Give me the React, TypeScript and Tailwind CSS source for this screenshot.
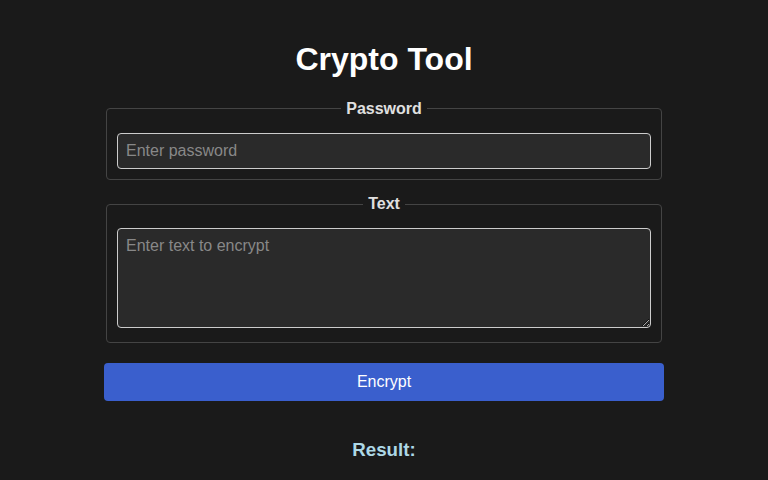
import React, { useState } from "react";

export default function App() {
  const [password, setPassword] = useState("");
  const [text, setText] = useState("");

  return (
    <div className="min-h-screen bg-[#1a1a1a] p-5 text-[#e0e0e0] font-['Liberation_Sans',Arial,sans-serif]">
      <div className="mx-auto w-[560px]">
        <h1 className="my-[21.44px] text-center text-[32px] font-bold leading-[1.15] text-white">
          Crypto Tool
        </h1>

        <fieldset className="mx-[2px] mb-[15px] rounded-[4px] border border-[#444] px-[10px] pt-[15px] pb-[10px]">
          <legend className="mx-auto px-[5px] text-base font-bold leading-[1.15]">Password</legend>
          <input
            type="password"
            value={password}
            onChange={(e) => setPassword(e.target.value)}
            placeholder="Enter password"
            className="block h-[36px] w-full rounded-[4px] border border-[#ccc] bg-[#2a2a2a] px-2 text-base text-white placeholder:text-[#888] outline-none"
          />
        </fieldset>

        <fieldset className="mx-[2px] mb-[20px] rounded-[4px] border border-[#444] px-[10px] pt-[15px] pb-[14px]">
          <legend className="mx-auto px-[5px] text-base font-bold leading-[1.15]">Text</legend>
          <textarea
            value={text}
            onChange={(e) => setText(e.target.value)}
            placeholder="Enter text to encrypt"
            className="block h-[100px] w-full rounded-[4px] border border-[#ccc] bg-[#2a2a2a] px-2 py-[5px] text-base text-white placeholder:text-[#888] outline-none"
          />
        </fieldset>

        <button className="h-[38px] w-full rounded-[4px] bg-[#3a5fcd] text-base text-white">
          Encrypt
        </button>

        <div>
          <h3 className="mt-[38px] mb-[18.72px] text-center text-[18.72px] font-bold leading-[1.15] text-[#add8e6]">
            Result:
          </h3>
        </div>
      </div>
    </div>
  );
}
